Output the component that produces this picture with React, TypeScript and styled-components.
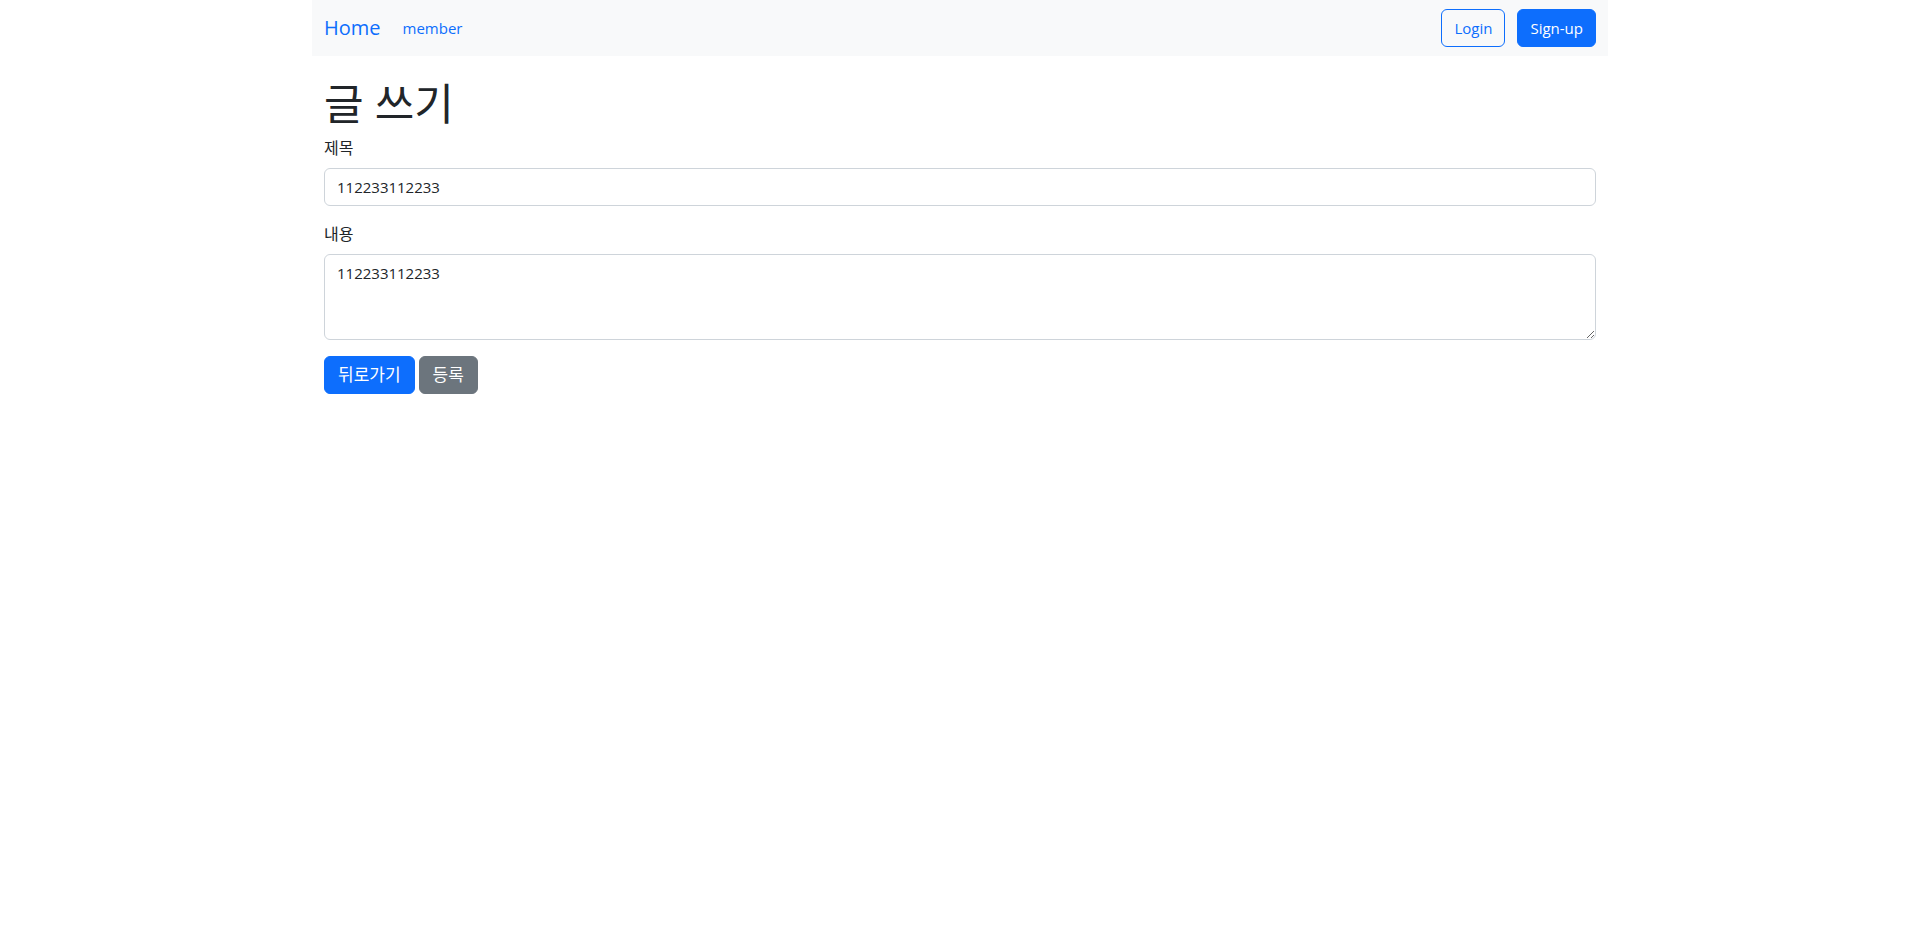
import styled, { createGlobalStyle } from 'styled-components';

const GlobalStyle = createGlobalStyle`
  *, *::before, *::after {
    box-sizing: border-box;
  }

  body {
    margin: 0;
    font-family: 'Open Sans', 'Noto Sans CJK KR', sans-serif;
    font-size: 16px;
    line-height: 1.5;
    color: #212529;
    background: #fff;
  }
`;

const Container = styled.div`
  max-width: 1320px;
  margin: 0 auto;
  padding: 0 12px;
`;

const Navbar = styled.nav`
  display: flex;
  align-items: center;
  justify-content: space-between;
  height: 56px;
  padding: 8px 12px;
  background: #f8f9fa;
`;

const NavLeft = styled.div`
  display: flex;
  align-items: center;
`;

const Brand = styled.a`
  margin-right: 14px;
  padding: 5px 0;
  font-size: 20px;
  line-height: 30px;
  color: #0d6efd;
  text-decoration: none;
`;

const NavLink = styled.a`
  padding: 8px;
  font-size: 15px;
  color: #0d6efd;
  text-decoration: none;
`;

const NavRight = styled.div`
  display: flex;
  gap: 12px;
`;

const Button = styled.button<{ $variant: 'primary' | 'outline' | 'secondary'; $korean?: boolean }>`
  height: 38px;
  padding: ${({ $korean }) => ($korean ? '6px 13px' : '6px 12px')};
  font-family: inherit;
  font-size: ${({ $korean }) => ($korean ? '17px' : '15px')};
  line-height: 24px;
  border-radius: 6px;
  border: 1px solid
    ${({ $variant }) => ($variant === 'secondary' ? '#6c757d' : '#0d6efd')};
  background: ${({ $variant }) =>
    $variant === 'primary' ? '#0d6efd' : $variant === 'secondary' ? '#6c757d' : 'transparent'};
  color: ${({ $variant }) => ($variant === 'outline' ? '#0d6efd' : '#fff')};
  cursor: pointer;
`;

const Main = styled.main`
  padding: 24px 12px 0;
`;

const Title = styled.h1`
  margin: 0 0 8px;
  font-size: 43px;
  font-weight: 400;
  line-height: 48px;
`;

const Field = styled.div`
  margin-bottom: 16px;
`;

const Label = styled.label`
  display: block;
  margin-bottom: 8px;
  font-size: 16px;
  line-height: 24px;
`;

const Input = styled.input`
  display: block;
  width: 100%;
  height: 38px;
  padding: 6px 12px;
  font-family: inherit;
  font-size: 15px;
  line-height: 24px;
  color: #212529;
  border: 1px solid #ced4da;
  border-radius: 6px;
  outline: none;
`;

const TextArea = styled.textarea`
  display: block;
  width: 100%;
  height: 86px;
  padding: 6px 12px;
  font-family: inherit;
  font-size: 15px;
  line-height: 24px;
  color: #212529;
  border: 1px solid #ced4da;
  border-radius: 6px;
  outline: none;
`;

const Actions = styled.div`
  display: flex;
  gap: 4px;
`;

export default function App() {
  return (
    <>
      <GlobalStyle />
      <Container>
        <Navbar>
          <NavLeft>
            <Brand href="#">Home</Brand>
            <NavLink href="#">member</NavLink>
          </NavLeft>
          <NavRight>
            <Button $variant="outline">Login</Button>
            <Button $variant="primary">Sign-up</Button>
          </NavRight>
        </Navbar>

        <Main>
          <Title>글 쓰기</Title>
          <Field>
            <Label>제목</Label>
            <Input defaultValue="112233112233" />
          </Field>
          <Field>
            <Label>내용</Label>
            <TextArea defaultValue="112233112233" />
          </Field>
          <Actions>
            <Button $variant="primary" $korean>
              뒤로가기
            </Button>
            <Button $variant="secondary" $korean>
              등록
            </Button>
          </Actions>
        </Main>
      </Container>
    </>
  );
}
